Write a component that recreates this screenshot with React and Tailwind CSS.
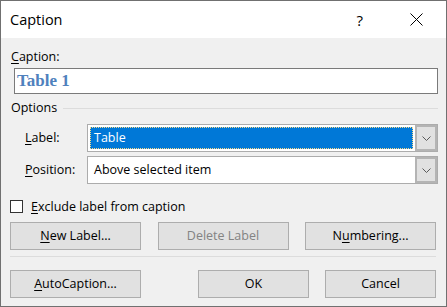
import { useState } from 'react'

const ui = "font-['Open_Sans','Liberation_Sans',sans-serif]"

function Key({ children }) {
  return <span className="underline underline-offset-2">{children}</span>
}

function Chevron() {
  return (
    <svg width="9" height="5" viewBox="0 0 9 5" className="block">
      <path d="M0.5 0.5 L4.5 4.5 L8.5 0.5" fill="none" stroke="#5a5a5a" strokeWidth="1" />
    </svg>
  )
}

function Combo({ value, selected }) {
  return (
    <div className="flex h-[28px] flex-1 border border-[#acacac] bg-white">
      <div className="flex flex-1 items-center p-[2px]">
        {selected ? (
          <div className="flex h-full w-full items-center border border-dotted border-[#f5d98a] bg-[#0078d7] pl-[3px] text-white">
            {value}
          </div>
        ) : (
          <div className="pl-[4px] text-black">{value}</div>
        )}
      </div>
      <div className="flex w-[22px] items-center justify-center border-2 border-[#b4b4b4] bg-[#e1e1e1]">
        <Chevron />
      </div>
    </div>
  )
}

function Button({ children, disabled, w = 'w-[131px]' }) {
  return (
    <div
      className={
        'flex h-[28px] items-center justify-center border border-[#adadad] bg-[#e1e1e1] ' +
        w +
        (disabled ? ' text-[#838383]' : ' text-black')
      }
    >
      {children}
    </div>
  )
}

export default function App() {
  const [exclude] = useState(false)

  return (
    <div className={'flex h-[307px] w-[447px] flex-col border border-[#707070] text-[12.5px] leading-[16px] ' + ui}>
      <div className="flex h-[37px] items-center bg-white pl-[9px] pr-[23px]">
        <span className="text-[14.5px] text-black">Caption</span>
        <span className="ml-auto text-[15px] text-black">?</span>
        <svg width="13" height="13" viewBox="0 0 13 13" className="ml-[47px]">
          <path d="M0.5 0.5 L12.5 12.5 M12.5 0.5 L0.5 12.5" stroke="#000" strokeWidth="1" />
        </svg>
      </div>

      <div className="flex flex-1 flex-col bg-[#f0f0f0] pl-[9px] pr-[8px] pt-[11px] text-black">
        <div className="pl-[1px]">
          <Key>C</Key>aption:
        </div>
        <div className="mt-[3px] ml-[4px] flex h-[26px] items-center border border-[#7a7a7a] bg-white pl-[2px]">
          <span className="font-['Liberation_Serif',serif] text-[17px] font-bold text-[#4f81bd]">Table 1</span>
        </div>

        <div className="mt-[6px] flex items-center pl-[1px]">
          <span>Options</span>
          <div className="ml-[6px] h-px flex-1 bg-[#dcdcdc]" />
        </div>

        <div className="mt-[8px] flex items-center">
          <span className="w-[77px] pl-[15px]">
            <Key>L</Key>abel:
          </span>
          <Combo value="Table" selected />
        </div>
        <div className="mt-[4px] flex items-center">
          <span className="w-[77px] pl-[15px]">
            <Key>P</Key>osition:
          </span>
          <Combo value="Above selected item" />
        </div>

        <label className="mt-[13px] flex items-center">
          <span className="h-[13px] w-[13px] border border-[#333333] bg-white">{exclude ? '✓' : null}</span>
          <span className="ml-[8px] mt-[2px]">
            <Key>E</Key>xclude label from caption
          </span>
        </label>

        <div className="mt-[7px] flex justify-between pr-[2px]">
          <Button>
            <Key>N</Key>ew Label...
          </Button>
          <Button disabled>Delete Label</Button>
          <Button>
            N<Key>u</Key>mbering...
          </Button>
        </div>

        <div className="mt-[6px] mr-[2px] h-px bg-[#dcdcdc]" />

        <div className="mt-[13px] flex pr-[2px]">
          <Button>
            <Key>A</Key>utoCaption...
          </Button>
          <div className="ml-auto flex gap-[16px]">
            <Button w="w-[111px]">OK</Button>
            <Button w="w-[111px]">Cancel</Button>
          </div>
        </div>
      </div>
    </div>
  )
}
